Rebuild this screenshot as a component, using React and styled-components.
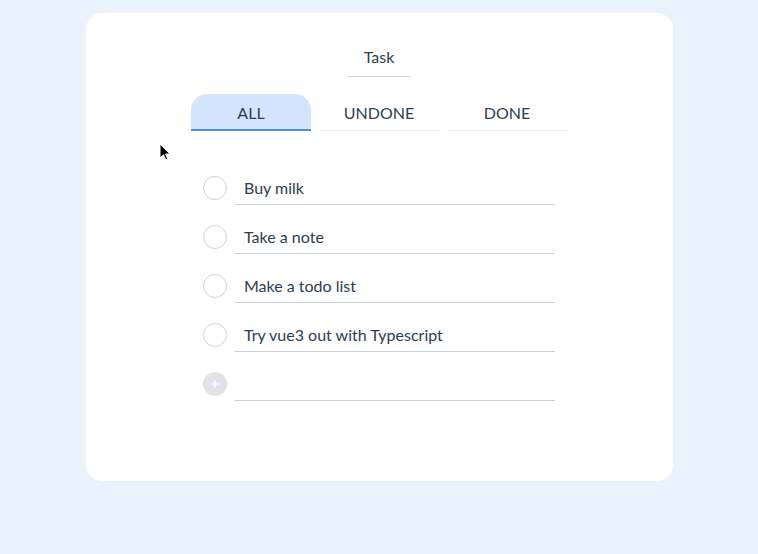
import React from "react";
import styled, { createGlobalStyle } from "styled-components";

const Global = createGlobalStyle`
  html, body { margin: 0; padding: 0; background: #eaf2fc; }
  body { font-family: Lato, "Noto Sans", sans-serif; color: #2c3e50; }
`;

const Page = styled.div`
  position: relative;
  width: 758px;
  height: 554px;
  padding-top: 13px;
  box-sizing: border-box;
`;

const Card = styled.div`
  width: 587px;
  margin: 0 auto;
  background: #fff;
  border-radius: 16px;
  padding: 34px 0 80px;
  box-sizing: border-box;
  display: flex;
  flex-direction: column;
  align-items: center;
`;

const Title = styled.h1`
  margin: 0;
  width: 63px;
  font-size: 16px;
  font-weight: 400;
  line-height: 20px;
  text-align: center;
  padding-bottom: 9px;
  border-bottom: 1px solid #d0d3da;
`;

const Tabs = styled.div`
  display: flex;
  gap: 8px;
  margin-top: 17px;
`;

const Tab = styled.button`
  width: 120px;
  height: 37px;
  border: none;
  border-radius: 16px 16px 0 0;
  border-bottom: ${(p) => (p.$active ? "2px solid #4a90e2" : "1px solid #e6e8ee")};
  background: ${(p) => (p.$active ? "#d4e5fb" : "transparent")};
  font-family: inherit;
  font-size: 16px;
  color: #2c3e50;
  padding: ${(p) => (p.$active ? "2px 0 0" : "2px 0 1px")};
  cursor: pointer;
`;

const List = styled.ul`
  list-style: none;
  margin: 25px 0 0;
  padding: 0;
  width: 352px;
`;

const Row = styled.li`
  display: flex;
  align-items: center;
  gap: 8px;
  margin-top: 16px;
`;

const Check = styled.span`
  width: 24px;
  height: 24px;
  border-radius: 50%;
  box-sizing: border-box;
  border: ${(p) => (p.$add ? "none" : "1px solid #cfd1d6")};
  background: ${(p) => (p.$add ? "#e2e3e8" : "#fff")};
  color: #fff;
  display: flex;
  align-items: center;
  justify-content: center;
  flex-shrink: 0;
  margin-top: -1px;
`;

const Field = styled.div`
  flex: 1;
  height: 32px;
  line-height: 32px;
  padding-left: 9px;
  font-size: 16px;
  border-bottom: 1px solid #c9cfdc;
`;

const Cursor = styled.svg`
  position: absolute;
  left: 159px;
  top: 143px;
`;

const todos = ["Buy milk", "Take a note", "Make a todo list", "Try vue3 out with Typescript"];

export default function App() {
  return (
    <Page>
      <Global />
      <Card>
        <Title>Task</Title>
        <Tabs>
          <Tab $active>ALL</Tab>
          <Tab>UNDONE</Tab>
          <Tab>DONE</Tab>
        </Tabs>
        <List>
          {todos.map((t) => (
            <Row key={t}>
              <Check />
              <Field>{t}</Field>
            </Row>
          ))}
          <Row>
            <Check $add>
              <svg width="10" height="10" viewBox="0 0 10 10">
                <path d="M5 1v8M1 5h8" stroke="#fff" strokeWidth="1.2" />
              </svg>
            </Check>
            <Field />
          </Row>
        </List>
      </Card>
      <Cursor width="12" height="18" viewBox="0 0 12 18">
        <path d="M1 1v14l3.5-3.3 2.3 5.2 2-.9-2.2-5H11z" fill="#000" stroke="#fff" strokeWidth="1" />
      </Cursor>
    </Page>
  );
}
